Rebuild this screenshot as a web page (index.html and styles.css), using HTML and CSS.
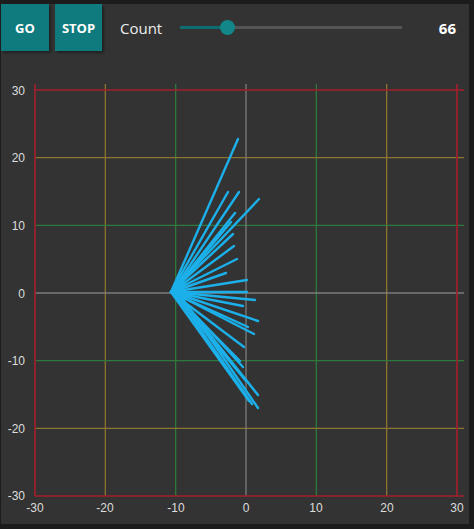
FILE: index.html
```html
<!DOCTYPE html>
<html lang="en">
<head>
  <meta charset="UTF-8" />
  <meta name="viewport" content="width=device-width, initial-scale=1.0" />
  <title>Rays</title>
  <link rel="stylesheet" href="styles.css">
</head>
<body>
  <div class="panel">
    <div class="toolbar">
      <button class="btn">GO</button>
      <button class="btn btn-stop">STOP</button>
      <span class="label">Count</span>
      <input class="slider" type="range" min="0" max="345" value="66" />
      <span class="value">66</span>
    </div>
    <svg class="chart" width="468" height="473" viewBox="0 0 468 473">
      <g transform="translate(-1 -51)">
        <g class="grid">
          <line class="gold" x1="105.33" y1="84" x2="105.33" y2="496" />
          <line class="gold" x1="386.67" y1="84" x2="386.67" y2="496" />
          <line class="green" x1="175.67" y1="84" x2="175.67" y2="496" />
          <line class="green" x1="316.33" y1="84" x2="316.33" y2="496" />
          <line class="gold" x1="35" y1="157.67" x2="464" y2="157.67" />
          <line class="gold" x1="35" y1="428.33" x2="464" y2="428.33" />
          <line class="green" x1="35" y1="225.33" x2="464" y2="225.33" />
          <line class="green" x1="35" y1="360.67" x2="464" y2="360.67" />
          <line class="zero" x1="246" y1="84" x2="246" y2="496" />
          <line class="zero" x1="35" y1="293" x2="464" y2="293" />
          <line class="red" x1="35" y1="84" x2="35" y2="496" />
          <line class="red" x1="457" y1="84" x2="457" y2="496" />
          <line class="red" x1="35" y1="90" x2="464" y2="90" />
          <line class="red" x1="35" y1="496" x2="464" y2="496" />
        </g>
        <g class="ticks-y">
          <text x="25" y="95">30</text>
          <text x="25" y="162">20</text>
          <text x="25" y="230">10</text>
          <text x="25" y="298">0</text>
          <text x="25" y="365">-10</text>
          <text x="25" y="433">-20</text>
          <text x="25" y="500">-30</text>
        </g>
        <g class="ticks-x">
          <text x="35" y="512">-30</text>
          <text x="105" y="512">-20</text>
          <text x="176" y="512">-10</text>
          <text x="246" y="512">0</text>
          <text x="316" y="512">10</text>
          <text x="387" y="512">20</text>
          <text x="457" y="512">30</text>
        </g>
        <g class="rays">
          <line x1="171" y1="292" x2="238" y2="139" />
          <line x1="171" y1="292" x2="228" y2="192" />
          <line x1="172" y1="292" x2="239" y2="192" />
          <line x1="171" y1="292" x2="259" y2="199" />
          <line x1="172" y1="292" x2="235" y2="213" />
          <line x1="173" y1="291" x2="231" y2="222" />
          <line x1="171" y1="292" x2="233" y2="234" />
          <line x1="172" y1="292" x2="234" y2="246" />
          <line x1="171" y1="292" x2="237" y2="259" />
          <line x1="172" y1="292" x2="226" y2="273" />
          <line x1="171" y1="292" x2="247" y2="280" />
          <line x1="180" y1="285" x2="196" y2="262" />
          <line x1="171" y1="292" x2="247" y2="292" />
          <line x1="172" y1="292" x2="255" y2="300" />
          <line x1="171" y1="292" x2="243" y2="306" />
          <line x1="172" y1="292" x2="258" y2="321" />
          <line x1="171" y1="292" x2="248" y2="327" />
          <line x1="172" y1="292" x2="254" y2="334" />
          <line x1="171" y1="292" x2="244" y2="347" />
          <line x1="172" y1="292" x2="240" y2="361" />
          <line x1="174" y1="292" x2="243" y2="367" />
          <line x1="172" y1="292" x2="246" y2="381" />
          <line x1="176" y1="292" x2="258" y2="395" />
          <line x1="171" y1="292" x2="249" y2="401" />
          <line x1="175" y1="293" x2="252" y2="404" />
          <line x1="178" y1="292" x2="258" y2="408" />
        </g>
      </g>
    </svg>
  </div>
</body>
</html>
```
FILE: styles.css
```css
body {
  margin: 0;
  background: #1c1c1c;
  font-family: 'Open Sans', 'Noto Sans', sans-serif;
  color: #eee;
}
.panel {
  width: 468px;
  height: 520px;
  margin: 4px 0 0 1px;
  background: #333;
}
.toolbar {
  display: flex;
  align-items: center;
  height: 47px;
  padding-right: 13px;
}
.btn {
  width: 48px;
  height: 47px;
  margin: 0;
  padding: 0;
  border: none;
  background: #0f7b7e;
  color: #fff;
  font-family: inherit;
  font-size: 13px;
  font-weight: 700;
  box-shadow: 2px 2px 2px rgba(0, 0, 0, 0.35);
}
.btn-stop {
  width: 47px;
  margin-left: 6px;
}
.label {
  margin-left: 18px;
  width: 42px;
  font-size: 15px;
  color: #eee;
}
.slider {
  -webkit-appearance: none;
  appearance: none;
  width: 222px;
  height: 16px;
  margin: 0 0 0 18px;
  background: transparent;
}
.slider::-webkit-slider-runnable-track {
  height: 3px;
  background: linear-gradient(to right, #0d6c6f 47px, #555 47px);
}
.slider::-webkit-slider-thumb {
  -webkit-appearance: none;
  width: 15px;
  height: 15px;
  margin-top: -6px;
  border: none;
  border-radius: 50%;
  background: #11878a;
}
.value {
  margin-left: auto;
  font-size: 15px;
  font-weight: 700;
  color: #fff;
}
.chart {
  display: block;
}
.grid line {
  stroke-width: 1.3;
}
.grid .red {
  stroke: #a51f2c;
  stroke-width: 1.6;
}
.grid .gold {
  stroke: #8d7530;
}
.grid .green {
  stroke: #2e7a3c;
}
.grid .zero {
  stroke: #7c7c7c;
}
.ticks-y text,
.ticks-x text {
  font-family: 'Liberation Sans', Arial, sans-serif;
  font-size: 12px;
  fill: #ddd;
}
.ticks-y text {
  text-anchor: end;
}
.ticks-x text {
  text-anchor: middle;
}
.rays line {
  stroke: #1cb0ea;
  stroke-width: 2.4;
  stroke-linecap: round;
}
```
